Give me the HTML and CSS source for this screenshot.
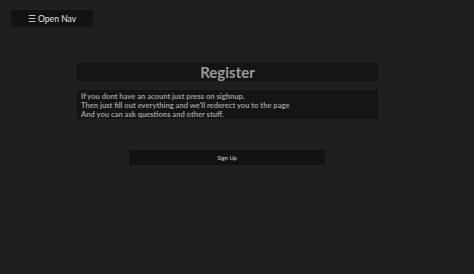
FILE: index.html
```html
<!DOCTYPE html>
<html>
<head>
<meta charset="utf-8">
<link rel="stylesheet" href="styles.css">
</head>
<body>
<div class="topbar">
  <button class="open-nav">☰ Open Nav</button>
</div>
<main class="content">
  <h1 class="title">Register</h1>
  <div class="info">
    <p>If you dont have an acount just press on sighnup.</p>
    <p>Then just fill out everything and we'll rederect you to the page</p>
    <p>And you can ask questions and other stuff.</p>
  </div>
  <div class="actions">
    <button class="signup">Sign Up</button>
  </div>
</main>
</body>
</html>
```
FILE: styles.css
```css
html, body {
  margin: 0;
  padding: 0;
  height: 100%;
  background: #1f1f1f;
  font-family: "Lato", "Open Sans", "Liberation Sans", sans-serif;
}
.topbar {
  padding: 10px 0 0 11px;
}
.open-nav {
  display: block;
  width: 82px;
  height: 17px;
  padding: 0;
  border: none;
  background: #121212;
  color: #e6e6e6;
  font-family: "Lato", "Liberation Sans", sans-serif;
  font-size: 8.6px;
}
.content {
  margin: 36px 0 0 77px;
  width: 301px;
}
.title {
  margin: 0;
  height: 18px;
  background: #141414;
  color: #9a9a9a;
  font-size: 15px;
  font-weight: 700;
  line-height: 18px;
  text-align: center;
}
.info {
  margin-top: 9px;
  height: 29px;
  padding: 2px 4px 0;
  box-sizing: border-box;
  background: #141414;
  color: #9c9c9c;
  font-size: 7.6px;
  font-weight: 700;
}
.info p {
  margin: 0;
  line-height: 9px;
}
.actions {
  margin-top: 31px;
  padding-left: 52px;
}
.signup {
  display: block;
  width: 196px;
  height: 15px;
  padding: 0;
  border: none;
  background: #121212;
  color: #dcdcdc;
  font-family: "Lato", "Liberation Sans", sans-serif;
  font-size: 5.8px;
}
```
